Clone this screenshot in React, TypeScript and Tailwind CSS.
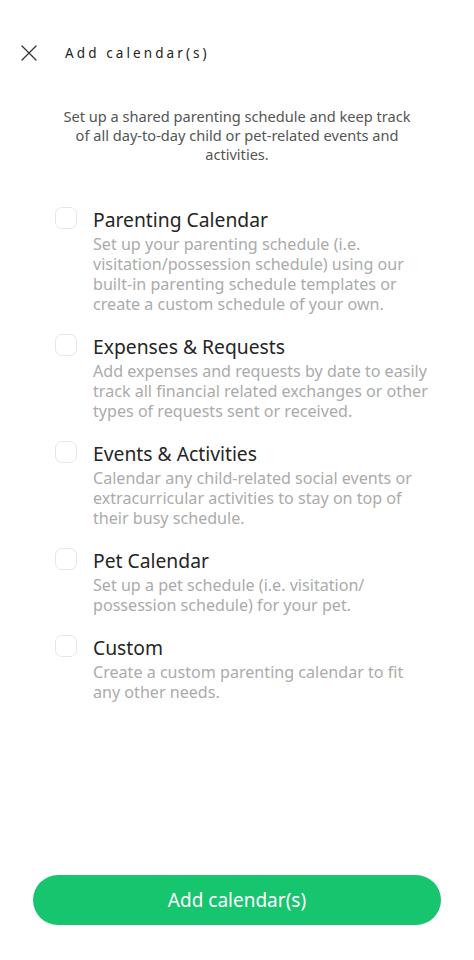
import React from "react";

const items: { title: string; lines: string[] }[] = [
  {
    title: "Parenting Calendar",
    lines: [
      "Set up your parenting schedule (i.e.",
      "visitation/possession schedule) using our",
      "built-in parenting schedule templates or",
      "create a custom schedule of your own.",
    ],
  },
  {
    title: "Expenses & Requests",
    lines: [
      "Add expenses and requests by date to easily",
      "track all financial related exchanges or other",
      "types of requests sent or received.",
    ],
  },
  {
    title: "Events & Activities",
    lines: [
      "Calendar any child-related social events or",
      "extracurricular activities to stay on top of",
      "their busy schedule.",
    ],
  },
  {
    title: "Pet Calendar",
    lines: ["Set up a pet schedule (i.e. visitation/", "possession schedule) for your pet."],
  },
  {
    title: "Custom",
    lines: ["Create a custom parenting calendar to fit", "any other needs."],
  },
];

export default function App() {
  return (
    <div className="flex h-[960px] w-[474px] flex-col bg-white font-['Noto_Sans',sans-serif]">
      <header className="flex h-[20px] items-center pl-[21px] mt-[43px]">
        <svg width="16" height="16" viewBox="0 0 16 16" className="shrink-0">
          <path d="M1 1 L15 15 M15 1 L1 15" stroke="#333" strokeWidth="1.3" strokeLinecap="round" />
        </svg>
        <h1 className="ml-[28px] text-[13.5px] tracking-[3.1px] text-[#222]">Add calendar(s)</h1>
      </header>

      <p className="mt-[44px] text-center text-[14.6px] leading-[19px] text-[#555]">
        Set up a shared parenting schedule and keep track
        <br />
        of all day-to-day child or pet-related events and
        <br />
        activities.
      </p>

      <ul className="mt-[43px] flex flex-col gap-[20px] pl-[55px]">
        {items.map((it) => (
          <li key={it.title} className="flex">
            <span className="h-[22px] w-[22px] shrink-0 rounded-[7px] border border-[#e6e6e6]" />
            <div className="ml-[16px]">
              <div className="text-[19.3px] leading-[26px] text-[#252525]">{it.title}</div>
              <div className="mt-[1px] text-[16.1px] leading-[20px] text-[#ababab]">
                {it.lines.map((l) => (
                  <div key={l}>{l}</div>
                ))}
              </div>
            </div>
          </li>
        ))}
      </ul>

      <div className="mt-auto px-[33px] pb-[35px]">
        <button className="h-[50px] w-full rounded-full bg-[#16c56d] text-[19px] text-white">
          Add calendar(s)
        </button>
      </div>
    </div>
  );
}
